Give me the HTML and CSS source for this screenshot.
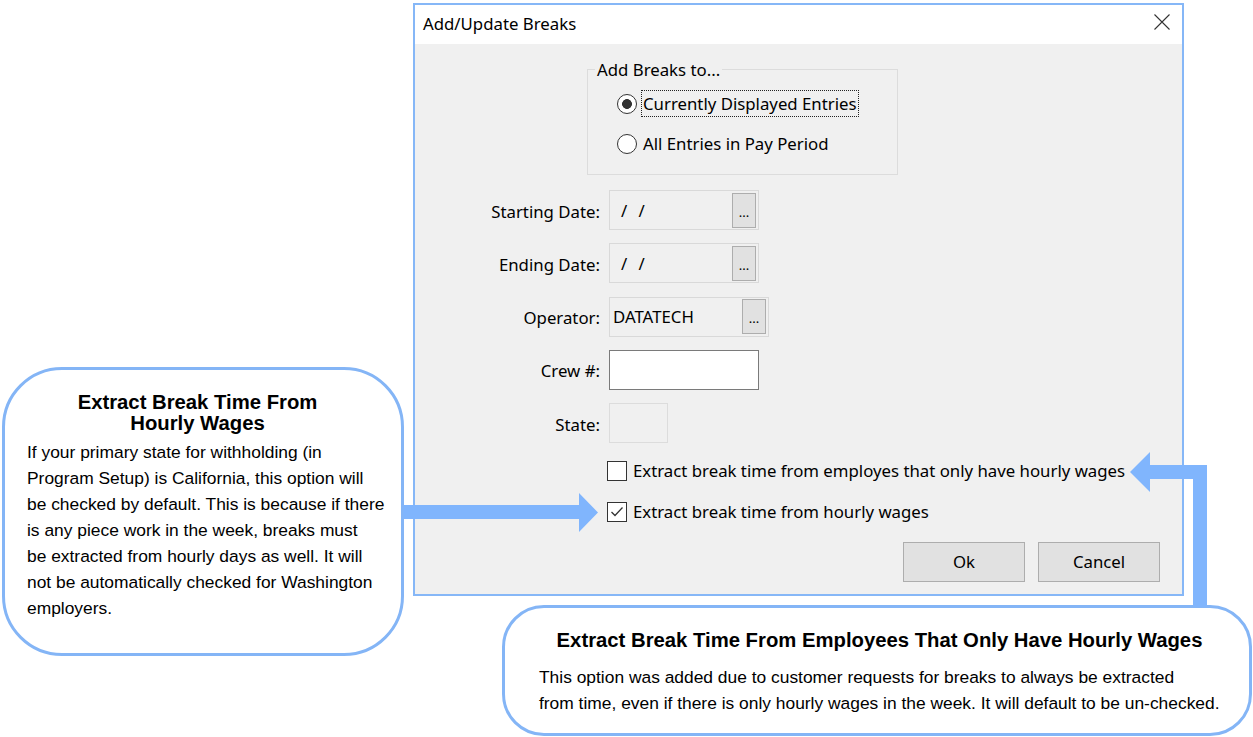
FILE: index.html
```html
<!DOCTYPE html>
<html lang="en">
<head>
<meta charset="UTF-8">
<meta name="viewport" content="width=device-width, initial-scale=1.0">
<title>Add/Update Breaks</title>
<link rel="stylesheet" href="styles.css">
</head>
<body>

<div class="canvas">

    <div class="dialog">
        <div class="titlebar">
            <span class="title">Add/Update Breaks</span>
            <svg class="close" width="16" height="16" viewBox="0 0 16 16">
                <path d="M0.5 0.5 L15.5 15.5 M15.5 0.5 L0.5 15.5" stroke="#333" stroke-width="1.1" fill="none"/>
            </svg>
        </div>

        <div class="dlg-body">
            <fieldset class="group">
                <legend>Add Breaks to...</legend>
                <div class="options">
                    <div class="opt">
                        <span class="radio checked"></span>
                        <span class="opt-text focus">Currently Displayed Entries</span>
                    </div>
                    <div class="opt">
                        <span class="radio"></span>
                        <span class="opt-text">All Entries in Pay Period</span>
                    </div>
                </div>
            </fieldset>

            <div class="form">
                <label>Starting Date:</label>
                <div class="field date"><span class="mask">/ /</span><span class="browse">...</span></div>

                <label>Ending Date:</label>
                <div class="field date"><span class="mask">/ /</span><span class="browse">...</span></div>

                <label>Operator:</label>
                <div class="field op"><span>DATATECH</span><span class="browse">...</span></div>

                <label>Crew #:</label>
                <div class="input"></div>

                <label>State:</label>
                <div class="state-box"></div>
            </div>

            <div class="checks">
                <div class="check">
                    <span class="box"></span>
                    <span>Extract break time from employes that only have hourly wages</span>
                </div>
                <div class="check">
                    <span class="box">
                        <svg width="18" height="18" viewBox="0 0 18 18">
                            <path d="M3.5 9 L7 12.5 L14.5 4.5" stroke="#333" stroke-width="1.3" fill="none"/>
                        </svg>
                    </span>
                    <span>Extract break time from hourly wages</span>
                </div>
            </div>

            <div class="buttons">
                <div class="btn">Ok</div>
                <div class="btn">Cancel</div>
            </div>
        </div>
    </div>

    <div class="callout callout-left">
        <h2>Extract Break Time From<br>Hourly Wages</h2>
        <p>If your primary state for withholding (in<br>
        Program Setup) is California, this option will<br>
        be checked by default. This is because if there<br>
        is any piece work in the week, breaks must<br>
        be extracted from hourly days as well. It will<br>
        not be automatically checked for Washington<br>
        employers.</p>
    </div>

    <div class="callout callout-right">
        <h2>Extract Break Time From Employees That Only Have Hourly Wages</h2>
        <p>This option was added due to customer requests for breaks to always be extracted<br>
        from time, even if there is only hourly wages in the week. It will default to be un-checked.</p>
    </div>

    <svg class="arrows" width="1253" height="737" viewBox="0 0 1253 737">
        <polygon points="403,505 579,505 579,493 598,512.5 579,532 579,519 403,519" fill="#80b5fd"/>
        <polygon points="1130,472 1150,452 1150,465 1207,465 1207,607 1193,607 1193,479 1150,479 1150,492" fill="#80b5fd"/>
    </svg>

</div>

</body>
</html>
```

FILE: styles.css
```css
body {
    margin: 0;
    padding: 0;
    background: #fff;
}
.canvas {
    position: relative;
    width: 1253px;
    height: 737px;
    overflow: hidden;
    background: #fff;
}

/* dialog */
.dialog {
    position: absolute;
    left: 413px;
    top: 3px;
    width: 771px;
    height: 593px;
    box-sizing: border-box;
    border: 2px solid #86b7f7;
    background: #f0f0f0;
    display: flex;
    flex-direction: column;
    font-family: "Noto Sans", "Open Sans", sans-serif;
    font-size: 16.8px;
    color: #000;
}
.titlebar {
    height: 39px;
    box-sizing: border-box;
    background: #fff;
    display: flex;
    align-items: center;
    justify-content: space-between;
    padding: 0 12px 2px 8px;
}
.close {
    margin-top: -3px;
}
.dlg-body {
    flex: 1;
    display: flex;
    flex-direction: column;
    align-items: flex-start;
}

.group {
    width: 311px;
    box-sizing: border-box;
    margin: 12px 0 0 172px;
    padding: 8px 0 17px 7px;
    border: 1px solid #dcdcdc;
    min-width: 0;
}
.group legend {
    padding: 4px 2px 2px;
    line-height: 20px;
}
.options {
    padding-left: 22px;
}
.opt {
    display: flex;
    align-items: center;
    height: 27px;
}
.opt + .opt {
    margin-top: 13px;
}
.radio {
    width: 20px;
    height: 20px;
    box-sizing: border-box;
    border: 1px solid #333;
    border-radius: 50%;
    background: #fff;
    margin-right: 4px;
}
.radio.checked {
    background: radial-gradient(circle, #333 0 4.6px, #fff 5.2px);
}
.opt-text {
    padding: 0 1px;
    line-height: 25px;
    border: 1px solid transparent;
}
.opt-text.focus {
    border: 1px dotted #222;
}

.form {
    margin-top: 15px;
    display: grid;
    grid-template-columns: 185px auto;
    column-gap: 9px;
    row-gap: 13.25px;
    align-items: center;
    justify-items: start;
}
.form label {
    justify-self: end;
    padding-top: 2px;
}
.field {
    height: 40px;
    box-sizing: border-box;
    border: 1px solid #d9d9d9;
    background: #f0f0f0;
    display: flex;
    align-items: center;
    justify-content: space-between;
    padding: 0 2px 0 11px;
}
.field.date {
    width: 150px;
}
.field.op {
    width: 160px;
    padding-left: 3px;
}
.mask {
    word-spacing: 7px;
}
.browse {
    width: 24px;
    height: 35px;
    box-sizing: border-box;
    border: 1px solid #adadad;
    background: #e1e1e1;
    display: flex;
    justify-content: center;
    align-items: flex-end;
    padding-bottom: 8px;
    font-size: 13px;
    line-height: 1;
}
.input {
    width: 150px;
    height: 40px;
    box-sizing: border-box;
    border: 1px solid #7a7a7a;
    background: #fff;
}
.state-box {
    width: 59px;
    height: 40px;
    box-sizing: border-box;
    border: 1px solid #dcdcdc;
}

.checks {
    margin: 14px 0 0 192px;
    display: flex;
    flex-direction: column;
    gap: 14px;
}
.check {
    display: flex;
    align-items: center;
    height: 27px;
}
.box {
    width: 20px;
    height: 20px;
    box-sizing: border-box;
    border: 1px solid #333;
    background: #fff;
    margin-right: 6px;
    display: flex;
}

.buttons {
    align-self: stretch;
    margin-top: 16.5px;
    display: flex;
    justify-content: flex-end;
    gap: 13px;
    padding-right: 22px;
}
.btn {
    width: 122px;
    height: 40px;
    box-sizing: border-box;
    border: 1px solid #adadad;
    background: #e1e1e1;
    display: flex;
    align-items: center;
    justify-content: center;
}

/* callouts */
.callout {
    position: absolute;
    box-sizing: border-box;
    border: 3px solid #84b5f6;
    background: #fff;
    font-family: "Liberation Sans", Arial, sans-serif;
    color: #000;
}
.callout h2 {
    margin: 0;
    font-size: 20.3px;
    line-height: 21px;
    font-weight: bold;
    text-align: center;
    white-space: nowrap;
}
.callout p {
    margin: 0;
    font-size: 17.4px;
    line-height: 26px;
    white-space: nowrap;
}
.callout-left {
    left: 2px;
    top: 367px;
    width: 402px;
    height: 289px;
    border-radius: 60px;
    padding: 22px 33px 0 22px;
}
.callout-left p {
    margin-top: 5px;
}
.callout-right {
    left: 502px;
    top: 605px;
    width: 750px;
    height: 131px;
    border-radius: 42px;
    padding: 21px 29px 0 34px;
}
.callout-right h2 {
    line-height: 22px;
}
.callout-right p {
    margin-top: 13px;
}

.arrows {
    position: absolute;
    left: 0;
    top: 0;
    pointer-events: none;
}
```
